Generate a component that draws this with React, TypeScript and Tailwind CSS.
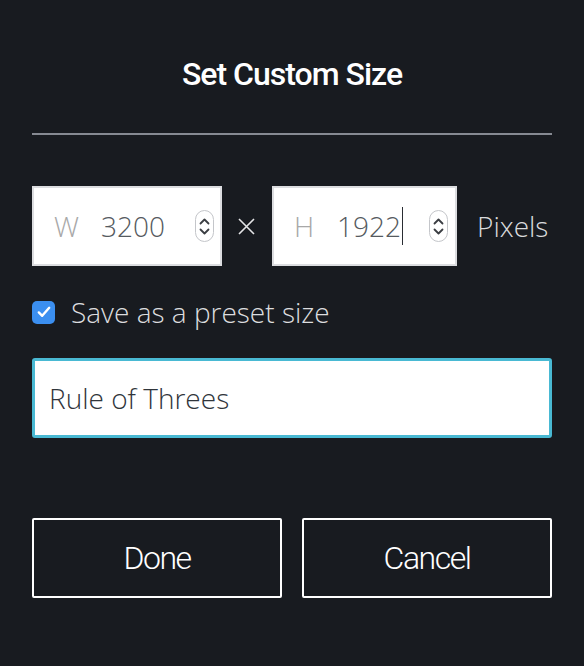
import { useState } from 'react';

function Spinner() {
  return (
    <div className="flex h-[32px] w-[19px] flex-col items-center justify-center gap-[3px] rounded-full border border-[#c4c6ca] bg-white">
      <svg width="11" height="7" viewBox="0 0 11 7" fill="none">
        <path d="M1.5 5.5L5.5 1.5L9.5 5.5" stroke="#3a3d42" strokeWidth="1.8" strokeLinecap="round" strokeLinejoin="round" />
      </svg>
      <svg width="11" height="7" viewBox="0 0 11 7" fill="none">
        <path d="M1.5 1.5L5.5 5.5L9.5 1.5" stroke="#3a3d42" strokeWidth="1.8" strokeLinecap="round" strokeLinejoin="round" />
      </svg>
    </div>
  );
}

export default function App() {
  const [saveAsPreset, setSaveAsPreset] = useState(true);
  const [presetName, setPresetName] = useState('Rule of Threes');

  return (
    <div className="h-[666px] w-full bg-[#181b20] px-8 font-['Open_Sans',sans-serif]">
      {/* Header */}
      <div className="pt-[56px] text-center">
        <h2 className="font-['Roboto',sans-serif] text-[32px] font-medium leading-[36px] tracking-[-1px] text-white">
          Set Custom Size
        </h2>
      </div>
      <div className="mt-[41px] h-[2px] w-full bg-[#868a92]" />

      {/* Size inputs */}
      <div className="mt-[51px] flex h-[80px] items-center">
        <div className="flex h-[80px] w-[190px] items-center border-2 border-[#dcdde0] bg-white pl-[20px] pr-[6px]">
          <span className="w-[47px] text-[28px] font-light text-[#a8a8a8]">W</span>
          <span className="flex-1 text-[28px] font-light text-[#555a60]">3200</span>
          <Spinner />
        </div>
        <div className="ml-[15px] flex w-[19px] justify-center">
          <svg width="19" height="19" viewBox="0 0 19 19" fill="none">
            <path d="M2 2L17 17M17 2L2 17" stroke="#e4e5e7" strokeWidth="1.6" />
          </svg>
        </div>
        <div className="ml-[16px] flex h-[80px] w-[185px] items-center border-2 border-[#dcdde0] bg-white pl-[20px] pr-[7px]">
          <span className="w-[43px] text-[28px] font-light text-[#a8a8a8]">H</span>
          <span className="flex flex-1 items-center text-[28px] font-light text-[#555a60]">
            1922
            <span className="ml-[1px] inline-block h-[38px] w-[1px] bg-[#2a2d33]" />
          </span>
          <Spinner />
        </div>
        <span className="ml-[20px] text-[28px] font-light text-[#d9dadc]">Pixels</span>
      </div>

      {/* Preset checkbox */}
      <label className="mt-[30px] flex h-[32px] items-center">
        <button
          type="button"
          onClick={() => setSaveAsPreset(!saveAsPreset)}
          className={`flex h-[23px] w-[23px] items-center justify-center rounded-[5px] ${saveAsPreset ? 'bg-[#3b8ff0]' : 'border border-[#888] bg-white'}`}
        >
          {saveAsPreset && (
            <svg width="14" height="12" viewBox="0 0 14 12" fill="none">
              <path d="M1.8 6.4L5.2 9.8L12.2 1.8" stroke="white" strokeWidth="2.4" strokeLinecap="round" strokeLinejoin="round" />
            </svg>
          )}
        </button>
        <span className="ml-[16px] text-[28px] font-light leading-[32px] text-[#dcdddf]">Save as a preset size</span>
      </label>

      {/* Preset name */}
      <input
        value={presetName}
        onChange={(event) => setPresetName(event.target.value)}
        className="mt-[30px] block h-[80px] w-full rounded-[3px] border-[3px] border-[#49b9d3] bg-white pl-[14px] text-[28px] font-light text-[#30353b] outline-none"
      />

      {/* Footer */}
      <div className="mt-[80px] flex gap-5">
        <button
          type="button"
          className="h-[80px] flex-1 rounded-[2px] border-2 border-white font-['Roboto',sans-serif] text-[32px] font-light tracking-[-1.5px] text-white"
        >
          Done
        </button>
        <button
          type="button"
          className="h-[80px] flex-1 rounded-[2px] border-2 border-white font-['Roboto',sans-serif] text-[32px] font-light tracking-[-1.5px] text-white"
        >
          Cancel
        </button>
      </div>
    </div>
  );
}
